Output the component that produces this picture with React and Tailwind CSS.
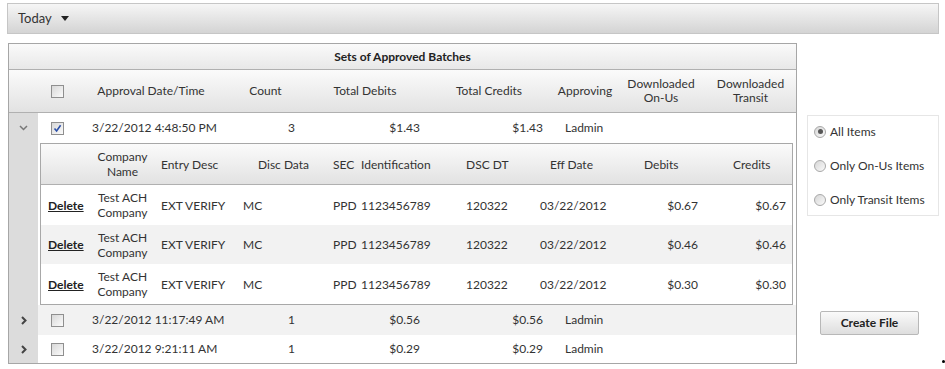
import React from "react";

const font = { fontFamily: "Lato, 'Open Sans', sans-serif" };

function Check({ checked }) {
  return (
    <span className="relative inline-block w-[13px] h-[13px] border border-[#8f8f8f] bg-gradient-to-br from-[#d8d8d8] to-[#fbfbfb]">
      {checked && (
        <svg className="absolute left-[1px] top-[1px]" width="9" height="9" viewBox="0 0 9 9">
          <path d="M1.5 4.5 L3.6 7 L7.6 1.2" fill="none" stroke="#2b4fa8" strokeWidth="1.6" />
        </svg>
      )}
    </span>
  );
}

function Chev({ open }) {
  return open ? (
    <svg width="9" height="6" viewBox="0 0 9 6">
      <path d="M1 1 L4.5 4.5 L8 1" fill="none" stroke="#777" strokeWidth="1.5" />
    </svg>
  ) : (
    <svg width="6" height="9" viewBox="0 0 6 9">
      <path d="M1 1 L4.5 4.5 L1 8" fill="none" stroke="#444" strokeWidth="2" />
    </svg>
  );
}

function Radio({ on }) {
  return (
    <span className="relative inline-flex items-center justify-center w-[12px] h-[12px] rounded-full border border-[#a8a8a8] bg-gradient-to-br from-[#d6d6d6] to-[#fafafa]">
      {on && <span className="w-[5px] h-[5px] rounded-full bg-[#555]" />}
    </span>
  );
}

function MainRow({ open, checked, date, count, deb, cred, bg, h }) {
  return (
    <div className={`flex ${h} ${bg}`}>
      <div className="w-[29px] bg-[#dcdcdc] flex items-center justify-center">
        <Chev open={open} />
      </div>
      <div className="w-[38px] flex items-center justify-center">
        <Check checked={checked} />
      </div>
      <div className="w-[150px] flex items-center pl-[16px]">{date}</div>
      <div className="w-[79px] flex items-center justify-end pr-[10px]">{count}</div>
      <div className="w-[120px] flex items-center justify-end pr-[5px]">{deb}</div>
      <div className="w-[128px] flex items-center justify-end pr-[10px]">{cred}</div>
      <div className="w-[64px] flex items-center pl-[12px]">Ladmin</div>
      <div className="flex-1" />
    </div>
  );
}

const nestedRows = [
  { d: "$0.67", bg: "bg-white" },
  { d: "$0.46", bg: "bg-[#f2f2f2]" },
  { d: "$0.30", bg: "bg-white" },
];

export default function App() {
  return (
    <div style={font} className="w-[945px] h-[369px] bg-white text-[12px] text-[#333] pt-[3px] pl-[7px] relative">
      <div className="w-[932px] h-[31px] border border-[#c6c6c6] bg-gradient-to-b from-[#f6f6f6] to-[#d4d4d4] flex items-center pl-[10px] gap-[9px]">
        <span className="text-[13px]">Today</span>
        <svg width="8" height="5" viewBox="0 0 8 5">
          <path d="M0 0 L8 0 L4 5 Z" fill="#222" />
        </svg>
      </div>

      <div className="flex mt-[9px]">
        <div className="ml-px w-[789px] border border-[#a6a6a6] flex flex-col">
          <div className="h-[26px] border-b border-[#b0b0b0] bg-gradient-to-b from-[#fafafa] to-[#e8e8e8] flex items-center justify-center font-bold text-[#222]">
            Sets of Approved Batches
          </div>
          <div className="h-[43px] border-b border-[#b0b0b0] bg-gradient-to-b from-[#fbfbfb] to-[#e2e2e2] flex leading-[14px]">
            <div className="w-[29px]" />
            <div className="w-[38px] flex items-center justify-center">
              <Check />
            </div>
            <div className="w-[150px] flex items-center justify-center">Approval Date/Time</div>
            <div className="w-[79px] flex items-center justify-center">Count</div>
            <div className="w-[120px] flex items-center justify-center">Total Debits</div>
            <div className="w-[128px] flex items-center justify-center">Total Credits</div>
            <div className="w-[64px] flex items-center justify-center">Approving</div>
            <div className="w-[88px] flex items-center justify-center text-center">Downloaded<br />On-Us</div>
            <div className="flex-1 flex items-center justify-center text-center">Downloaded<br />Transit</div>
          </div>

          <MainRow open checked date="3/22/2012 4:48:50 PM" count="3" deb="$1.43" cred="$1.43" bg="bg-white" h="h-[30px]" />

          <div className="flex h-[162px]">
            <div className="w-[29px] bg-[#dcdcdc]" />
            <div className="flex-1 pl-[2px] pr-[3px]">
              <div className="border border-[#a8a8a8] h-[162px] flex flex-col">
                <div className="h-[42px] border-b border-[#b0b0b0] bg-gradient-to-b from-[#fbfbfb] to-[#e2e2e2] flex leading-[15px]">
                  <div className="w-[48px]" />
                  <div className="w-[67px] flex items-center justify-center text-center">Company<br />Name</div>
                  <div className="w-[83px] flex items-center pl-[5px]">Entry Desc</div>
                  <div className="w-[90px] flex items-center pl-[19px]">Disc Data</div>
                  <div className="w-[27px] flex items-center pl-[4px]">SEC</div>
                  <div className="w-[105px] flex items-center pl-[5px]">Identification</div>
                  <div className="w-[70px] flex items-center pl-[5px]">DSC DT</div>
                  <div className="w-[80px] flex items-center pl-[19px]">Eff Date</div>
                  <div className="w-[95px] flex items-center pl-[33px]">Debits</div>
                  <div className="flex-1 flex items-center pl-[27px]">Credits</div>
                </div>
                {nestedRows.map((r, i) => (
                  <div key={i} className={`h-[40px] flex leading-[15px] ${r.bg}`}>
                    <div className="w-[48px] flex items-center pl-[7px]">
                      <span className="font-bold underline text-[#222]">Delete</span>
                    </div>
                    <div className="w-[67px] flex items-center justify-center text-center">Test ACH<br />Company</div>
                    <div className="w-[83px] flex items-center pl-[5px]">EXT VERIFY</div>
                    <div className="w-[90px] flex items-center pl-[4px]">MC</div>
                    <div className="w-[27px] flex items-center pl-[4px]">PPD</div>
                    <div className="w-[105px] flex items-center pl-[5px]">1123456789</div>
                    <div className="w-[70px] flex items-center pl-[5px]">120322</div>
                    <div className="w-[80px] flex items-center pl-[9px]">03/22/2012</div>
                    <div className="w-[95px] flex items-center justify-end pr-[8px]">{r.d}</div>
                    <div className="flex-1 flex items-center justify-end pr-[6px]">{r.d}</div>
                  </div>
                ))}
              </div>
            </div>
          </div>

          <MainRow date="3/22/2012 11:17:49 AM" count="1" deb="$0.56" cred="$0.56" bg="bg-[#f2f2f2]" h="h-[30px]" />
          <MainRow date="3/22/2012 9:21:11 AM" count="1" deb="$0.29" cred="$0.29" bg="bg-white" h="h-[28px]" />
        </div>

        <div className="flex flex-col ml-[10px]">
          <div className="mt-[72px] w-[132px] h-[101px] border border-[#e6e6e6] flex flex-col justify-center gap-[16px] pl-[6px] text-[12px]">
            <div className="flex items-center gap-[4px]"><Radio on /><span>All Items</span></div>
            <div className="flex items-center gap-[4px]"><Radio /><span>Only On-Us Items</span></div>
            <div className="flex items-center gap-[4px]"><Radio /><span>Only Transit Items</span></div>
          </div>
          <div className="mt-[95px] ml-[13px] w-[99px] h-[24px] border border-[#b8b8b8] rounded-[2px] bg-gradient-to-b from-[#fafafa] to-[#dedede] flex items-center justify-center font-bold text-[#222]">
            Create File
          </div>
        </div>
      </div>
      <span className="absolute left-[942px] top-[360px] w-[3px] h-[3px] rounded-full bg-black" />
    </div>
  );
}
